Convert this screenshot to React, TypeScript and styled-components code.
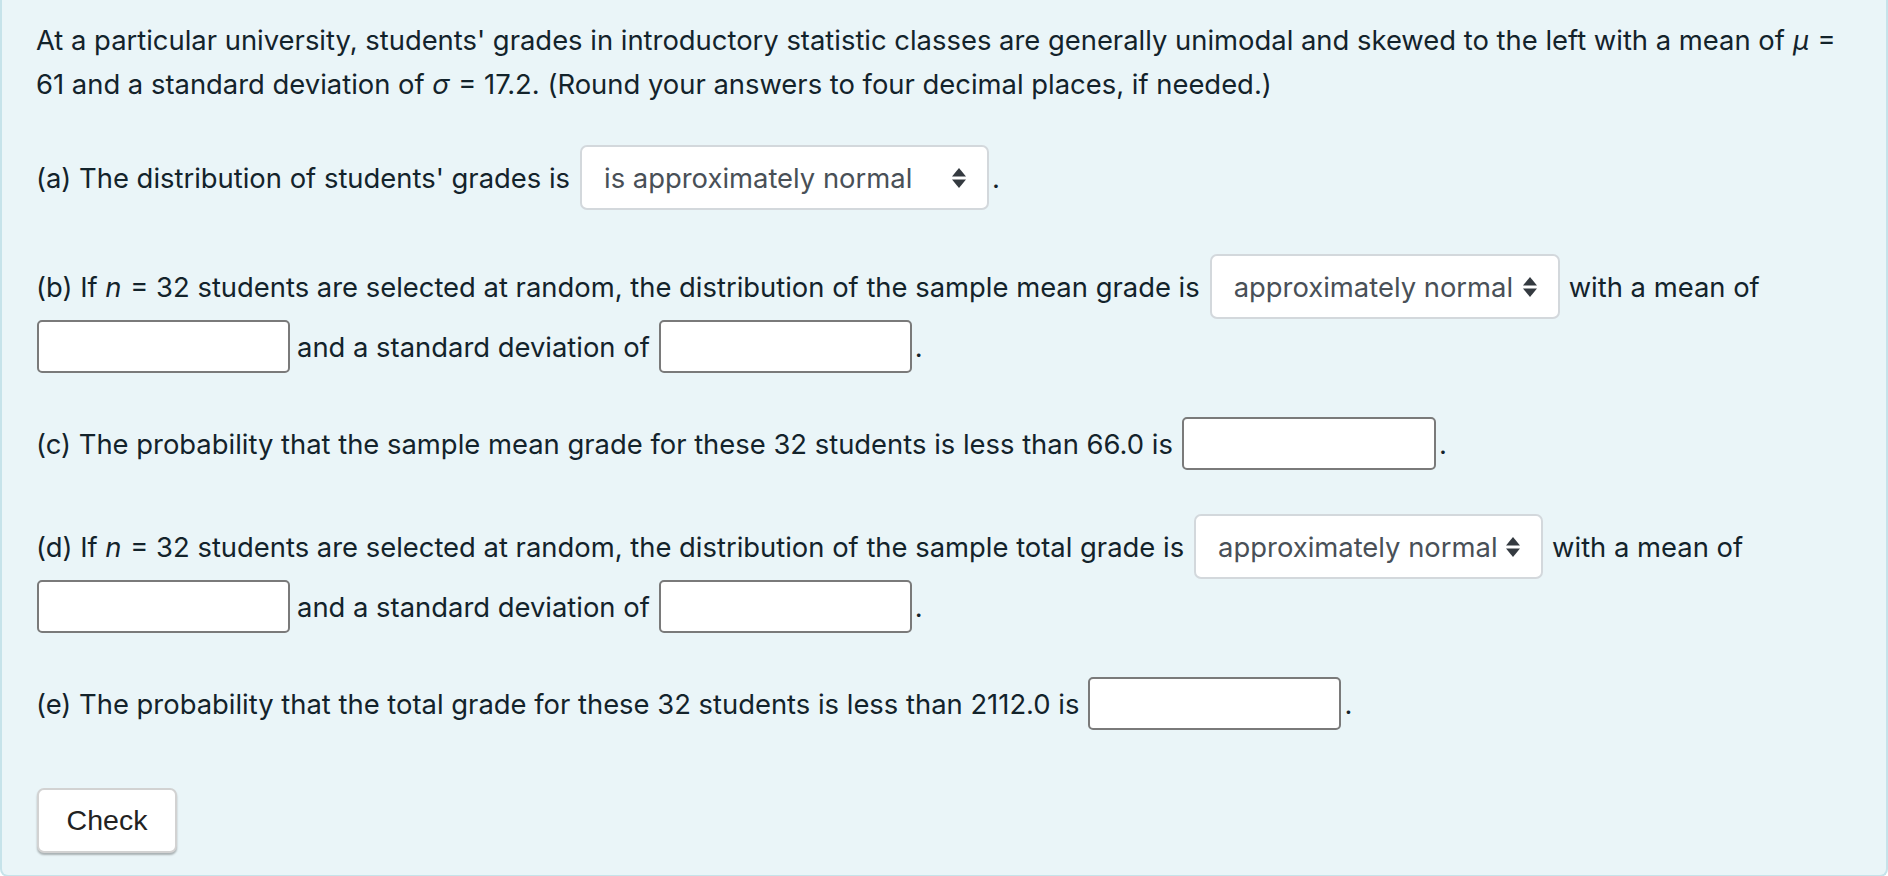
import styled, { createGlobalStyle } from 'styled-components';

const GlobalStyle = createGlobalStyle`
  body {
    margin: 0;
    background: #ffffff;
  }
`;

const Panel = styled.div`
  box-sizing: border-box;
  width: 100%;
  background: #eaf5f8;
  border: 2px solid #c6e3ea;
  border-top: none;
  border-radius: 0 0 8px 8px;
  padding: 18px 36px 22px 34px;
  font-family: Inter, 'Noto Sans', sans-serif;
  font-size: 27.4px;
  line-height: 44px;
  color: #13232b;
`;

const Intro = styled.p`
  margin: 0 0 39px;
`;

const Parts = styled.div`
  display: flex;
  flex-direction: column;
  gap: 44px;
`;

const Part = styled.div`
  display: flex;
  flex-direction: column;
  gap: 1px;
`;

const Line = styled.div`
  display: flex;
  align-items: center;
  white-space: nowrap;
`;

const Var = styled.i`
  font-style: italic;
  padding-right: 1px;
`;

const Period = styled.span`
  margin-left: 3px;
`;

const SelectWrap = styled.span<{ $w: number; $end?: boolean }>`
  position: relative;
  display: inline-flex;
  flex: none;
  width: ${p => p.$w}px;
  height: 65px;
  margin: 0 ${p => (p.$end ? 0 : 9)}px 0 10px;
`;

const Select = styled.select`
  appearance: none;
  box-sizing: border-box;
  width: 100%;
  height: 100%;
  padding: 0 44px 0 22px;
  background: #ffffff;
  border: 2px solid #d3d8dc;
  border-radius: 7px;
  font: inherit;
  color: #495057;
  outline: none;
`;

const Arrows = styled.svg`
  position: absolute;
  right: 22px;
  top: 50%;
  transform: translateY(-50%);
  pointer-events: none;
`;

const Blank = styled.input<{ $w?: number; $lead?: boolean; $end?: boolean }>`
  box-sizing: border-box;
  flex: none;
  width: ${p => p.$w ?? 253}px;
  height: 53px;
  margin: 0 ${p => (p.$end ? 0 : 7)}px 0 ${p => (p.$lead ? 1 : 9)}px;
  padding: 0 10px;
  background: #ffffff;
  border: 2px solid #7a7a7a;
  border-radius: 5px;
  font: inherit;
  color: #13232b;
`;

const CheckButton = styled.button`
  align-self: flex-start;
  box-sizing: border-box;
  width: 140px;
  height: 65px;
  margin: 58px 0 0 1px;
  background: #ffffff;
  border: 2px solid #d2d2d2;
  border-radius: 7px;
  box-shadow: 0 2px 2px rgba(0, 0, 0, 0.28);
  font-family: 'Liberation Sans', Arial, sans-serif;
  font-size: 28.5px;
  color: #222222;
  cursor: pointer;
`;

const options = ['is approximately normal', 'is skewed to the left', 'is skewed to the right'];
const sampleOptions = ['approximately normal', 'skewed to the left', 'skewed to the right'];

const Dropdown = ({ w, items, end }: { w: number; items: string[]; end?: boolean }) => (
  <SelectWrap $w={w} $end={end}>
    <Select defaultValue={items[0]}>
      {items.map(item => (
        <option key={item}>{item}</option>
      ))}
    </Select>
    <Arrows width="16" height="22" viewBox="0 0 16 22">
      <path d="M1 9.5 L8 1 L15 9.5 Z" fill="#343a40" />
      <path d="M1 12.5 L8 21 L15 12.5 Z" fill="#343a40" />
    </Arrows>
  </SelectWrap>
);

export default function App() {
  return (
    <>
      <GlobalStyle />
      <Panel>
        <Intro>
          At a particular university, students' grades in introductory statistic classes are generally
          unimodal and skewed to the left with a mean of <Var>μ</Var> = 61 and a standard deviation of{' '}
          <Var>σ</Var> = 17.2. (Round your answers to four decimal places, if needed.)
        </Intro>
        <Parts>
          <Part>
            <Line>
              <span>(a) The distribution of students' grades is</span>
              <Dropdown w={409} items={options} end />
              <Period>.</Period>
            </Line>
          </Part>
          <Part>
            <Line>
              <span>
                (b) If <Var>n</Var> = 32 students are selected at random, the distribution of the sample mean
                grade is
              </span>
              <Dropdown w={350} items={sampleOptions} />
              <span>with a mean of</span>
            </Line>
            <Line>
              <Blank $lead aria-label="mean of sample mean" />
              <span>and a standard deviation of</span>
              <Blank $end aria-label="standard deviation of sample mean" />
              <Period>.</Period>
            </Line>
          </Part>
          <Part>
            <Line>
              <span>(c) The probability that the sample mean grade for these 32 students is less than 66.0 is</span>
              <Blank $w={254} $end aria-label="probability of sample mean" />
              <Period>.</Period>
            </Line>
          </Part>
          <Part>
            <Line>
              <span>
                (d) If <Var>n</Var> = 32 students are selected at random, the distribution of the sample total
                grade is
              </span>
              <Dropdown w={349} items={sampleOptions} />
              <span>with a mean of</span>
            </Line>
            <Line>
              <Blank $lead aria-label="mean of sample total" />
              <span>and a standard deviation of</span>
              <Blank $end aria-label="standard deviation of sample total" />
              <Period>.</Period>
            </Line>
          </Part>
          <Part>
            <Line>
              <span>(e) The probability that the total grade for these 32 students is less than 2112.0 is</span>
              <Blank $end aria-label="probability of total" />
              <Period>.</Period>
            </Line>
          </Part>
        </Parts>
        <CheckButton type="button">Check</CheckButton>
      </Panel>
    </>
  );
}
